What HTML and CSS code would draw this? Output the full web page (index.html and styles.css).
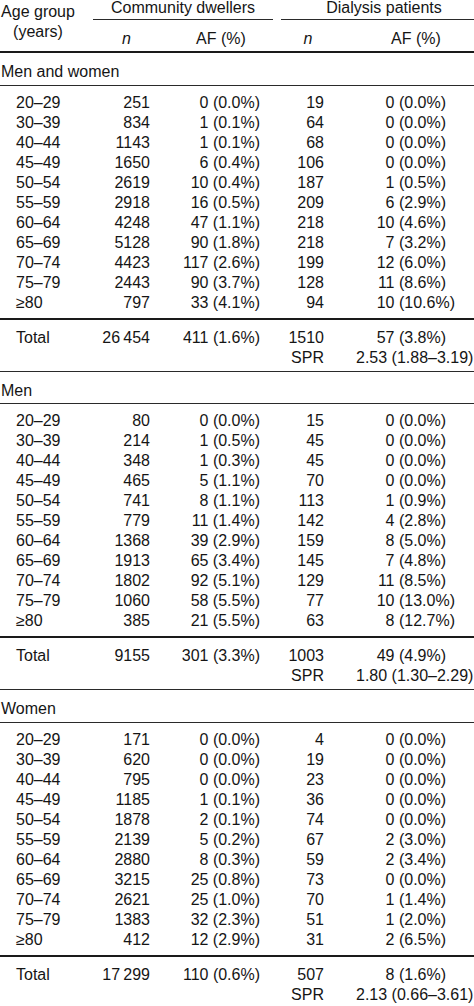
FILE: index.html
```html
<!DOCTYPE html>
<html>
<head>
<meta charset="utf-8">
<link rel="stylesheet" href="styles.css">
</head>
<body>
<div class="table">
  <div class="head">
    <div class="h-age">Age group<br>(years)</div>
    <div class="h-span h-comm">Community dwellers</div>
    <div class="h-span h-dial">Dialysis patients</div>
    <div class="h-sub h-n1"><i>n</i></div>
    <div class="h-sub h-af1">AF (%)</div>
    <div class="h-sub h-n2"><i>n</i></div>
    <div class="h-sub h-af2">AF (%)</div>
  </div>

  <div class="label">Men and women</div>
  <div class="rows">
    <div class="row"><span class="age">20–29</span><span class="n1">251</span><span class="af1">0 (0.0%)</span><span class="n2">19</span><span class="af2"><span class="c">0</span><span class="p">(0.0%)</span></span></div>
    <div class="row"><span class="age">30–39</span><span class="n1">834</span><span class="af1">1 (0.1%)</span><span class="n2">64</span><span class="af2"><span class="c">0</span><span class="p">(0.0%)</span></span></div>
    <div class="row"><span class="age">40–44</span><span class="n1">1143</span><span class="af1">1 (0.1%)</span><span class="n2">68</span><span class="af2"><span class="c">0</span><span class="p">(0.0%)</span></span></div>
    <div class="row"><span class="age">45–49</span><span class="n1">1650</span><span class="af1">6 (0.4%)</span><span class="n2">106</span><span class="af2"><span class="c">0</span><span class="p">(0.0%)</span></span></div>
    <div class="row"><span class="age">50–54</span><span class="n1">2619</span><span class="af1">10 (0.4%)</span><span class="n2">187</span><span class="af2"><span class="c">1</span><span class="p">(0.5%)</span></span></div>
    <div class="row"><span class="age">55–59</span><span class="n1">2918</span><span class="af1">16 (0.5%)</span><span class="n2">209</span><span class="af2"><span class="c">6</span><span class="p">(2.9%)</span></span></div>
    <div class="row"><span class="age">60–64</span><span class="n1">4248</span><span class="af1">47 (1.1%)</span><span class="n2">218</span><span class="af2"><span class="c">10</span><span class="p">(4.6%)</span></span></div>
    <div class="row"><span class="age">65–69</span><span class="n1">5128</span><span class="af1">90 (1.8%)</span><span class="n2">218</span><span class="af2"><span class="c">7</span><span class="p">(3.2%)</span></span></div>
    <div class="row"><span class="age">70–74</span><span class="n1">4423</span><span class="af1">117 (2.6%)</span><span class="n2">199</span><span class="af2"><span class="c">12</span><span class="p">(6.0%)</span></span></div>
    <div class="row"><span class="age">75–79</span><span class="n1">2443</span><span class="af1">90 (3.7%)</span><span class="n2">128</span><span class="af2"><span class="c">11</span><span class="p">(8.6%)</span></span></div>
    <div class="row"><span class="age">≥80</span><span class="n1">797</span><span class="af1">33 (4.1%)</span><span class="n2">94</span><span class="af2"><span class="c">10</span><span class="p">(10.6%)</span></span></div>
  </div>
  <div class="totals">
    <div class="row"><span class="age">Total</span><span class="n1">26&#8201;454</span><span class="af1">411 (1.6%)</span><span class="n2">1510</span><span class="af2"><span class="c">57</span><span class="p">(3.8%)</span></span></div>
    <div class="row"><span class="n2">SPR</span><span class="spr">2.53 (1.88–3.19)</span></div>
  </div>

  <div class="label">Men</div>
  <div class="rows">
    <div class="row"><span class="age">20–29</span><span class="n1">80</span><span class="af1">0 (0.0%)</span><span class="n2">15</span><span class="af2"><span class="c">0</span><span class="p">(0.0%)</span></span></div>
    <div class="row"><span class="age">30–39</span><span class="n1">214</span><span class="af1">1 (0.5%)</span><span class="n2">45</span><span class="af2"><span class="c">0</span><span class="p">(0.0%)</span></span></div>
    <div class="row"><span class="age">40–44</span><span class="n1">348</span><span class="af1">1 (0.3%)</span><span class="n2">45</span><span class="af2"><span class="c">0</span><span class="p">(0.0%)</span></span></div>
    <div class="row"><span class="age">45–49</span><span class="n1">465</span><span class="af1">5 (1.1%)</span><span class="n2">70</span><span class="af2"><span class="c">0</span><span class="p">(0.0%)</span></span></div>
    <div class="row"><span class="age">50–54</span><span class="n1">741</span><span class="af1">8 (1.1%)</span><span class="n2">113</span><span class="af2"><span class="c">1</span><span class="p">(0.9%)</span></span></div>
    <div class="row"><span class="age">55–59</span><span class="n1">779</span><span class="af1">11 (1.4%)</span><span class="n2">142</span><span class="af2"><span class="c">4</span><span class="p">(2.8%)</span></span></div>
    <div class="row"><span class="age">60–64</span><span class="n1">1368</span><span class="af1">39 (2.9%)</span><span class="n2">159</span><span class="af2"><span class="c">8</span><span class="p">(5.0%)</span></span></div>
    <div class="row"><span class="age">65–69</span><span class="n1">1913</span><span class="af1">65 (3.4%)</span><span class="n2">145</span><span class="af2"><span class="c">7</span><span class="p">(4.8%)</span></span></div>
    <div class="row"><span class="age">70–74</span><span class="n1">1802</span><span class="af1">92 (5.1%)</span><span class="n2">129</span><span class="af2"><span class="c">11</span><span class="p">(8.5%)</span></span></div>
    <div class="row"><span class="age">75–79</span><span class="n1">1060</span><span class="af1">58 (5.5%)</span><span class="n2">77</span><span class="af2"><span class="c">10</span><span class="p">(13.0%)</span></span></div>
    <div class="row"><span class="age">≥80</span><span class="n1">385</span><span class="af1">21 (5.5%)</span><span class="n2">63</span><span class="af2"><span class="c">8</span><span class="p">(12.7%)</span></span></div>
  </div>
  <div class="totals">
    <div class="row"><span class="age">Total</span><span class="n1">9155</span><span class="af1">301 (3.3%)</span><span class="n2">1003</span><span class="af2"><span class="c">49</span><span class="p">(4.9%)</span></span></div>
    <div class="row"><span class="n2">SPR</span><span class="spr">1.80 (1.30–2.29)</span></div>
  </div>

  <div class="label">Women</div>
  <div class="rows">
    <div class="row"><span class="age">20–29</span><span class="n1">171</span><span class="af1">0 (0.0%)</span><span class="n2">4</span><span class="af2"><span class="c">0</span><span class="p">(0.0%)</span></span></div>
    <div class="row"><span class="age">30–39</span><span class="n1">620</span><span class="af1">0 (0.0%)</span><span class="n2">19</span><span class="af2"><span class="c">0</span><span class="p">(0.0%)</span></span></div>
    <div class="row"><span class="age">40–44</span><span class="n1">795</span><span class="af1">0 (0.0%)</span><span class="n2">23</span><span class="af2"><span class="c">0</span><span class="p">(0.0%)</span></span></div>
    <div class="row"><span class="age">45–49</span><span class="n1">1185</span><span class="af1">1 (0.1%)</span><span class="n2">36</span><span class="af2"><span class="c">0</span><span class="p">(0.0%)</span></span></div>
    <div class="row"><span class="age">50–54</span><span class="n1">1878</span><span class="af1">2 (0.1%)</span><span class="n2">74</span><span class="af2"><span class="c">0</span><span class="p">(0.0%)</span></span></div>
    <div class="row"><span class="age">55–59</span><span class="n1">2139</span><span class="af1">5 (0.2%)</span><span class="n2">67</span><span class="af2"><span class="c">2</span><span class="p">(3.0%)</span></span></div>
    <div class="row"><span class="age">60–64</span><span class="n1">2880</span><span class="af1">8 (0.3%)</span><span class="n2">59</span><span class="af2"><span class="c">2</span><span class="p">(3.4%)</span></span></div>
    <div class="row"><span class="age">65–69</span><span class="n1">3215</span><span class="af1">25 (0.8%)</span><span class="n2">73</span><span class="af2"><span class="c">0</span><span class="p">(0.0%)</span></span></div>
    <div class="row"><span class="age">70–74</span><span class="n1">2621</span><span class="af1">25 (1.0%)</span><span class="n2">70</span><span class="af2"><span class="c">1</span><span class="p">(1.4%)</span></span></div>
    <div class="row"><span class="age">75–79</span><span class="n1">1383</span><span class="af1">32 (2.3%)</span><span class="n2">51</span><span class="af2"><span class="c">1</span><span class="p">(2.0%)</span></span></div>
    <div class="row"><span class="age">≥80</span><span class="n1">412</span><span class="af1">12 (2.9%)</span><span class="n2">31</span><span class="af2"><span class="c">2</span><span class="p">(6.5%)</span></span></div>
  </div>
  <div class="totals">
    <div class="row"><span class="age">Total</span><span class="n1">17&#8201;299</span><span class="af1">110 (0.6%)</span><span class="n2">507</span><span class="af2"><span class="c">8</span><span class="p">(1.6%)</span></span></div>
    <div class="row"><span class="n2">SPR</span><span class="spr">2.13 (0.66–3.61)</span></div>
  </div>
</div>
</body>
</html>
```

FILE: styles.css
```css
html, body {
  margin: 0;
  padding: 0;
  background: #ffffff;
  overflow: hidden;
}

body {
  font-family: "Liberation Sans", Arial, sans-serif;
  font-size: 16px;
  color: #151515;
  width: 474px;
}

.table {
  width: 474px;
}

/* ---------- header ---------- */
.head {
  display: grid;
  grid-template-columns: 93px 67px 113px 8px 54px 139px;
  grid-template-rows: auto auto;
  height: 51px;
  border-bottom: 2px solid #1a1a1a;
}

.h-age {
  grid-column: 1;
  grid-row: 1 / 3;
  width: 76px;
  text-align: center;
  padding-top: 2px;
  line-height: 19.5px;
}

.h-span {
  grid-row: 1;
  line-height: 16px;
  height: 16px;
  padding-bottom: 3px;
  border-bottom: 1.5px solid #2a2a2a;
  text-align: center;
  white-space: nowrap;
}

.h-comm {
  grid-column: 2 / 4;
}

.h-dial {
  grid-column: 5 / 7;
  padding-left: 13px;
}

.h-sub {
  grid-row: 2;
  line-height: 20px;
  margin-top: 7.5px;
  text-align: center;
  white-space: nowrap;
}

.h-sub i {
  font-style: italic;
}

.h-n1 { grid-column: 2; }
.h-af1 { grid-column: 3; padding-left: 9px; }
.h-n2 { grid-column: 5; }
.h-af2 { grid-column: 6; padding-left: 23px; }

/* ---------- section labels ---------- */
.label {
  line-height: 20px;
  padding: 9px 0 2.5px 1px;
  border-bottom: 1.5px solid #2a2a2a;
}

/* ---------- rows ---------- */
.rows {
  padding: 7px 0 5px;
  border-bottom: 2px solid #1a1a1a;
}

.totals {
  padding: 8px 0 3px;
  border-bottom: 1.5px solid #2a2a2a;
}

.row {
  display: grid;
  grid-template-columns: 93px 67px 113px 8px 54px 139px;
  height: 20px;
  line-height: 20px;
  white-space: nowrap;
}

.age {
  grid-column: 1;
  padding-left: 16px;
}

.n1 {
  grid-column: 2;
  text-align: right;
  padding-right: 10px;
}

.af1 {
  grid-column: 3;
  text-align: right;
  padding-right: 13px;
}

.n2 {
  grid-column: 5;
  text-align: right;
  padding-right: 11px;
}

.af2 {
  grid-column: 6;
  display: flex;
}

.af2 .c {
  width: 59.5px;
  text-align: right;
  flex: none;
}

.af2 .p {
  margin-left: 4.45px;
}

.spr {
  grid-column: 6;
  padding-left: 21px;
  overflow: visible;
}
```
